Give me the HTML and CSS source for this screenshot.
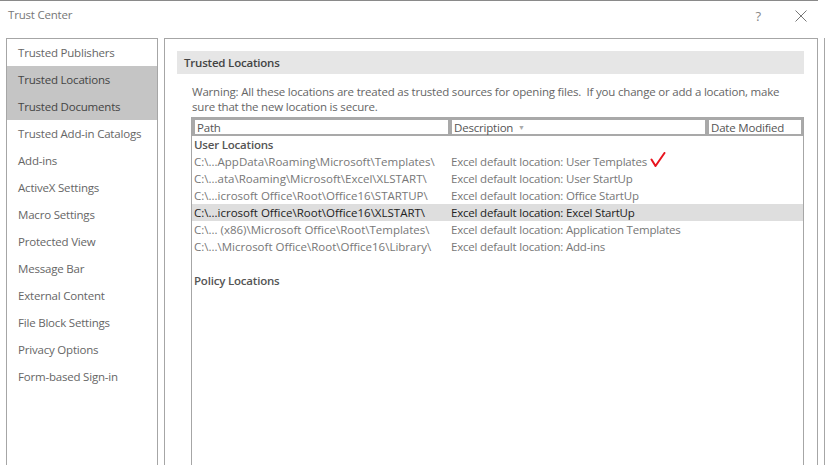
FILE: index.html
```html
<!DOCTYPE html>
<html>
<head>
<meta charset="utf-8">
<link rel="stylesheet" href="styles.css">
</head>
<body>
<div class="window">
  <div class="titlebar">
    <span class="title">Trust Center</span>
    <div class="controls">
      <span class="help">?</span>
      <svg class="close" width="12" height="12" viewBox="0 0 12 12"><path d="M0.5 0.5 L11.5 11.5 M11.5 0.5 L0.5 11.5" stroke="#777" stroke-width="1" fill="none"/></svg>
    </div>
  </div>
  <div class="main">
    <nav class="nav">
      <div class="nav-item">Trusted Publishers</div>
      <div class="nav-item active">Trusted Locations</div>
      <div class="nav-item hover">Trusted Documents</div>
      <div class="nav-item">Trusted Add-in Catalogs</div>
      <div class="nav-item">Add-ins</div>
      <div class="nav-item">ActiveX Settings</div>
      <div class="nav-item">Macro Settings</div>
      <div class="nav-item">Protected View</div>
      <div class="nav-item">Message Bar</div>
      <div class="nav-item">External Content</div>
      <div class="nav-item">File Block Settings</div>
      <div class="nav-item">Privacy Options</div>
      <div class="nav-item">Form-based Sign-in</div>
    </nav>
    <section class="panel">
      <h2 class="heading">Trusted Locations</h2>
      <div class="content">
        <p class="warning">Warning: All these locations are treated as trusted sources for opening files.&nbsp; If you change or add a location, make sure that the new location is secure.</p>
        <div class="table">
          <div class="thead">
            <div class="th c-path">Path</div>
            <div class="th c-desc">Description <span class="sort">&#9660;</span></div>
            <div class="th c-date">Date Modified</div>
          </div>
          <div class="tbody">
            <div class="group">User Locations</div>
            <div class="row"><span class="c-path">C:\...AppData\Roaming\Microsoft\Templates\</span><span class="c-desc">Excel default location: User Templates<svg class="check" width="16" height="16" viewBox="0 0 16 16"><path d="M1.5 7.5 L5.5 14 L14.5 1" stroke="#e8141e" stroke-width="2" fill="none" stroke-linecap="round" stroke-linejoin="round"/></svg></span></div>
            <div class="row"><span class="c-path">C:\...ata\Roaming\Microsoft\Excel\XLSTART\</span><span class="c-desc">Excel default location: User StartUp</span></div>
            <div class="row"><span class="c-path">C:\...icrosoft Office\Root\Office16\STARTUP\</span><span class="c-desc">Excel default location: Office StartUp</span></div>
            <div class="row selected"><span class="c-path">C:\...icrosoft Office\Root\Office16\XLSTART\</span><span class="c-desc">Excel default location: Excel StartUp</span></div>
            <div class="row"><span class="c-path">C:\... (x86)\Microsoft Office\Root\Templates\</span><span class="c-desc">Excel default location: Application Templates</span></div>
            <div class="row"><span class="c-path">C:\...\Microsoft Office\Root\Office16\Library\</span><span class="c-desc">Excel default location: Add-ins</span></div>
            <div class="group policy">Policy Locations</div>
          </div>
        </div>
      </div>
    </section>
  </div>
</div>
<div class="edge"></div>
</body>
</html>
```
FILE: styles.css
```css
html, body {
  margin: 0;
  padding: 0;
  background: #fff;
  overflow: hidden;
  height: 100%;
}
body {
  font-family: "Open Sans", "Noto Sans", sans-serif;
  font-size: 11.5px;
  letter-spacing: -0.2px;
  color: #666;
}
.window {
  width: 818px;
  height: 465px;
  border-top: 1px solid #8a8a8a;
  box-sizing: border-box;
  overflow: hidden;
}
.titlebar {
  height: 37px;
  display: flex;
  justify-content: space-between;
  align-items: flex-start;
}
.title {
  margin-left: 8px;
  margin-top: 6px;
  color: #777;
}
.controls {
  display: flex;
  align-items: center;
  margin-top: 8px;
  margin-right: 11px;
}
.help {
  font-size: 13px;
  color: #888;
  line-height: 14px;
  margin-right: 34px;
}
.close {
  display: block;
}
.main {
  display: flex;
  padding-left: 6px;
  gap: 6px;
  height: 500px;
}
.nav {
  width: 150px;
  border: 1px solid #a6a6a6;
  border-bottom: none;
  flex: none;
}
.nav-item {
  height: 27px;
  line-height: 28px;
  padding-left: 11px;
  color: #666;
  white-space: nowrap;
}
.nav-item.active, .nav-item.hover {
  background: #c5c5c5;
  color: #444;
}
.panel {
  width: 654px;
  border: 1px solid #a6a6a6;
  border-bottom: none;
  flex: none;
  padding: 12px 13px 0 12px;
  box-sizing: border-box;
}
.heading {
  margin: 0;
  height: 23px;
  line-height: 23px;
  background: #e6e6e6;
  padding-left: 7px;
  font-size: 11.5px;
  font-weight: 600;
  color: #444;
}
.content {
  padding-left: 14px;
}
.warning {
  margin: 10px 0 3px 1px;
  line-height: 15px;
  color: #666;
}
.table {
  border-left: 1px solid #a6a6a6;
  border-right: 1px solid #a6a6a6;
  height: 400px;
}
.thead {
  display: flex;
  gap: 4px;
  background: #a9a9a9;
  padding: 3px 2px 2px 3px;
}
.th {
  background: #fff;
  height: 14px;
  line-height: 15px;
  padding-left: 2px;
  color: #555;
  white-space: nowrap;
}
.th.c-path { width: 251px; }
.th.c-desc { width: 251px; }
.th.c-date { flex: 1; }
.sort {
  font-size: 7px;
  color: #aaa;
  vertical-align: 2px;
  margin-left: 2px;
}
.group {
  line-height: 17px;
  padding-left: 2px;
  font-weight: 600;
  color: #555;
  margin-top: 0;
}
.group.policy {
  margin-top: 17px;
}
.row {
  display: flex;
  line-height: 17px;
  height: 17px;
  padding-left: 2px;
  color: #777;
  white-space: nowrap;
}
.row.selected {
  background: #dedede;
  color: #222;
}
.row .c-path {
  width: 257px;
  flex: none;
  letter-spacing: 0;
}
.row .c-desc {
  display: flex;
  align-items: center;
}
.check {
  margin-left: 3px;
  margin-top: -4px;
}
.edge {
  position: absolute;
  left: 824px;
  top: 38px;
  width: 1px;
  height: 430px;
  background: #a6a6a6;
}
```
